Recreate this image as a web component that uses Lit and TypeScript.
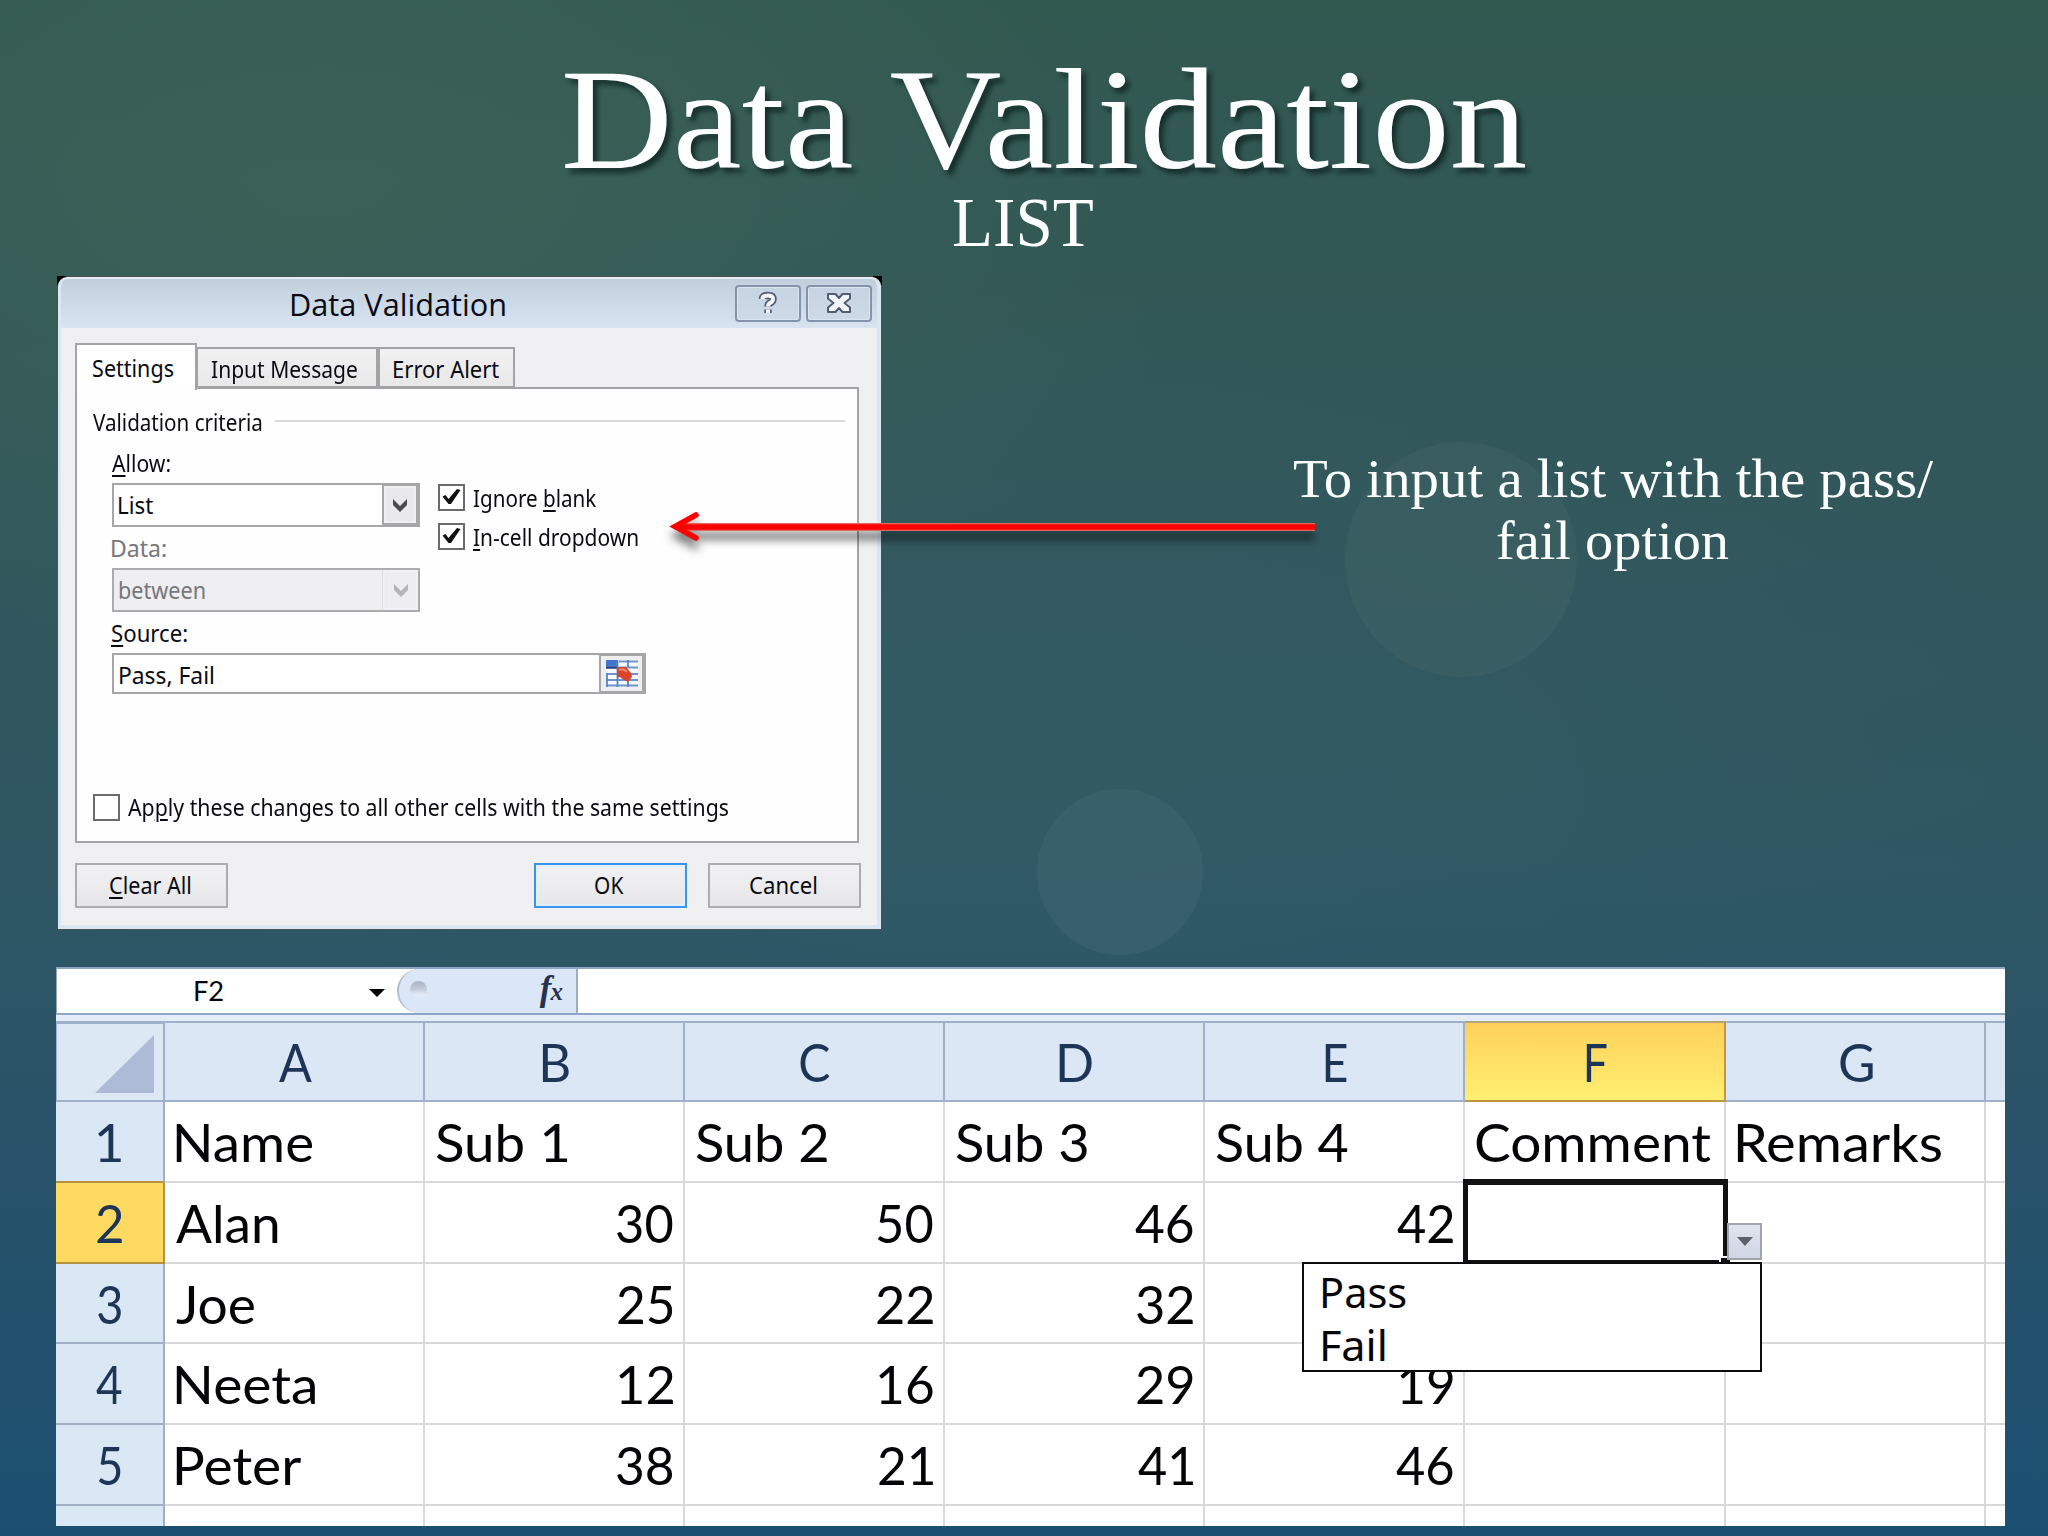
import { LitElement, html, css, svg, nothing } from "lit";
import { customElement, property } from "lit/decorators.js";
import { classMap } from "lit/directives/class-map.js";

/** One line of text whose inked width is set; `key` is the index of an underlined letter. */
@customElement("fit-text")
class FitText extends LitElement {
  @property() text = "";
  @property({ type: Number }) w = 0;
  @property({ type: Number }) key = -1;

  static styles = css`
    :host { display: inline-block; flex: none; }
    .t { display: inline-block; white-space: pre; transform-origin: 0 50%; }
    .u { text-decoration: underline; text-decoration-thickness: 2px; text-underline-offset: 3px; }
  `;

  firstUpdated() {
    const cs = getComputedStyle(this);
    const ctx = document.createElement("canvas").getContext("2d")!;
    ctx.font = `${cs.fontStyle} ${cs.fontWeight} ${cs.fontSize} ${cs.fontFamily}`;
    const m = ctx.measureText(this.text);
    const ink = m.actualBoundingBoxLeft + m.actualBoundingBoxRight;
    const s = this.w / ink;
    this.style.width = `${this.w}px`;
    const span = this.renderRoot.querySelector(".t") as HTMLElement;
    span.style.transform = `translateX(${m.actualBoundingBoxLeft * s}px) scaleX(${s})`;
  }

  render() {
    const { text, key } = this;
    if (key < 0) return html`<span class="t">${text}</span>`;
    return html`<span class="t">${text.slice(0, key)}<span class="u">${text[key]}</span>${text.slice(key + 1)}</span>`;
  }
}

const fit = (text: string, w: number, key = -1) =>
  html`<fit-text .text=${text} .w=${w} .key=${key}></fit-text>`;

@customElement("validation-dialog")
class ValidationDialog extends LitElement {
  static styles = css`
    * { box-sizing: border-box; }
    :host {
      display: block; width: 825px; height: 654px; padding: 1px 1px 1px;
      box-sizing: border-box; color: #0b0b14;
      font: 23px/30px "Noto Sans", "Open Sans", sans-serif;
      background:
        linear-gradient(#000, #000) 0 0 / 9px 9px no-repeat,
        linear-gradient(#000, #000) 100% 0 / 9px 9px no-repeat, #4b5257;
    }
    .win { height: 652px; border-radius: 9px 9px 0 0; background: #f0eff1; overflow: hidden;
      border: solid #dbe6f3; border-width: 2px 4px 4px 3px; border-top-color: #e4edf4; display: flex; flex-direction: column; }
    .bar { height: 49px; flex: none; display: flex; align-items: flex-start; padding: 6px 6px 0 231px;
      background: linear-gradient(#c2cfdc, #cddae7 55%, #d8e4f1); margin-right: -1px; }
    .bar fit-text { font: 31px/39px "Open Sans", sans-serif; margin-right: auto; }
    .cap { width: 66px; height: 37px; margin-left: 5px; border: 2px solid #8494ad; border-radius: 4px;
      background: linear-gradient(#c6d3e1, #cddbe9); box-shadow: inset 0 0 0 1px #dbe6f1; }
    .cap svg { display: block; margin: 4px auto 0; }
    .body { padding: 15px 0 0 14px; }
    .tabs { display: flex; align-items: flex-end; height: 45px; position: relative; z-index: 1; }
    .tab { height: 41px; border: 2px solid #a4a4a6; background: linear-gradient(#f2f1f2, #e8e8e9); padding: 5px 0 0 13px; }
    .tab.on { height: 47px; margin-bottom: -2px; background: #fff; border-bottom: 0; width: 122px; padding: 8px 0 0 16px; align-self: flex-start; }
    .t2 { width: 182px; margin-left: -1px; } .t3 { width: 137px; padding-left: 14px; }
    .panel { width: 784px; height: 456px; margin-top: -1px; border: 2px solid #a4a4a6; background: #fefefe;
      display: flex; flex-direction: column; padding: 17px 12px 20px 16px; }
    .legend { display: flex; align-items: center; gap: 13px; }
    .legend fit-text { line-height: 32px; margin-bottom: -2px; }
    .rule { height: 2px; flex: 1; background: #dadadf; }
    .cols { display: flex; gap: 18px; padding: 12px 0 0 19px; }
    .fields { display: flex; flex-direction: column; width: 308px; }
    .combo { height: 44px; border: 2px solid #a6a5a7; margin: 5px 0 6px; display: flex; padding-left: 5px; line-height: 41px; background: #fff; }
    .combo.off { background: #efeef0; color: #77777c; border-color: #acabad; }
    .btn { margin-left: auto; width: 36px; border: solid #a6a5a7; border-width: 1px 2px 2px 2px; background: #e9e8ea;
      display: grid; place-items: center; box-shadow: inset 0 0 0 2px #f1f0f2; }
    .off .btn { border-color: #dddcdf; border-width: 0 0 0 1px; width: 36px; background: #eeedef; }
    .dim { color: #77777c; }
    .checks { display: flex; flex-direction: column; gap: 12px; padding-top: 36px; }
    .check { display: flex; align-items: center; gap: 8px; height: 27px; }
    .check fit-text { line-height: 28px; }
    .box { width: 27px; height: 27px; border: 2px solid #6b6a6c; background: #fff; flex: none; display: grid; place-items: center; }
    .src { display: flex; flex-direction: column; padding-left: 19px; }
    .ref { width: 534px; height: 41px; margin-top: 5px; border: 2px solid #a6a5a7; display: flex; padding-left: 6px; line-height: 40px; background: #fff; }
    .pick { margin-left: auto; width: 45px; border: solid #a6a5a7; border-width: 1px 2px 1px 2px; background: #eeedef; display: grid; place-items: center; }
    .apply { margin-top: auto; }
    .apply fit-text { line-height: 29px; }
    .foot { display: flex; width: 786px; margin-top: 20px; gap: 21px; }
    .push { width: 153px; height: 45px; border: 2px solid #acabad; background: linear-gradient(#f2f1f3, #e6e5e7);
      display: flex; justify-content: center; line-height: 41px; padding-right: 3px; }
    .push.ok { margin-left: auto; border-color: #3c94ef; box-shadow: inset 0 0 0 2px #dff0fb; }
  `;

  private chev(c: string) {
    return html`<svg width="18" height="16" viewBox="0 0 18 16"><path d="M2 2 L9 9 L16 2 V8 L9 15 L2 8Z" fill=${c}></path></svg>`;
  }

  private box(on: boolean) {
    return html`<span class="box">${on
      ? html`<svg width="21" height="21" viewBox="0 0 21 21"><path d="M1.5 9.5 L4.5 8 L7.5 12 L16 2 L19.5 3 L10 17 H7.5Z" fill="#101012"></path></svg>`
      : nothing}</span>`;
  }

  render() {
    return html`
      <div class="win">
        <div class="bar">
          ${fit("Data Validation", 213)}
          <div class="cap"><svg width="24" height="25" viewBox="0 0 24 25">
            <g fill="none" stroke-linejoin="round">
              <path d="M6.500 8 Q6.500 4.500 12 4.500 Q17 4.500 17 8 Q17 10.500 14 12 Q12 13.200 12 15.500 M12 18.500 V22" stroke="#525e74" stroke-width="7.500"></path>
              <path d="M6.500 8 Q6.500 4.500 12 4.500 Q17 4.500 17 8 Q17 10.500 14 12 Q12 13.200 12 15.500 M12 18.500 V22" stroke="#f4f5f8" stroke-width="4"></path>
            </g></svg></div>
          <div class="cap"><svg width="26" height="25" viewBox="0 0 26 25">
            <path d="M2 3 H9.500 L13 7 L16.500 3 H24 V7.500 L18.500 12 L24 16.500 V21 H16.500 L13 17 L9.500 21 H2 V16.500 L7.500 12 L2 7.500Z"
              fill="#f4f5f8" stroke="#525e74" stroke-width="2" stroke-linejoin="round"></path>
          </svg></div>
        </div>
        <div class="body">
          <div class="tabs">
            <div class="tab on">${fit("Settings", 80)}</div>
            <div class="tab t2">${fit("Input Message", 146)}</div>
            <div class="tab t3">${fit("Error Alert", 105)}</div>
          </div>
          <div class="panel">
            <div class="legend">${fit("Validation criteria", 169)}<span class="rule"></span></div>
            <div class="cols">
              <div class="fields">
                ${fit("Allow:", 58, 0)}
                <div class="combo">${fit("List", 34)}<span class="btn">${this.chev("#4b4a4e")}</span></div>
                <span class="dim">${fit("Data:", 54)}</span>
                <div class="combo off">${fit("between", 86)}<span class="btn">${this.chev("#b5b4b8")}</span></div>
              </div>
              <div class="checks">
                <div class="check">${this.box(true)}${fit("Ignore blank", 124, 7)}</div>
                <div class="check">${this.box(true)}${fit("In-cell dropdown", 165, 0)}</div>
              </div>
            </div>
            <div class="src">
              ${fit("Source:", 75, 0)}
              <div class="ref">${fit("Pass, Fail", 93)}<span class="pick">
                <svg width="32" height="27" viewBox="0 0 32 27">
                  <rect width="32" height="27" fill="#f7fafd"></rect>
                  <rect width="12" height="6" fill="#4377cf"></rect>
                  <path d="M0 7.500 H12" stroke="#1f3f86" stroke-width="2.500"></path>
                  <path d="M13 1.500 H32 M13 7.500 H32 M0 14 H32 M0 20 H32 M0 25.500 H32" stroke="#6f93cc" stroke-width="2.200"></path>
                  <path d="M1 13 V27 M11.500 0 V27 M22 0 V7 M22 20 V27" stroke="#5b83c4" stroke-width="1.800"></path>
                  <path d="M11 7 L20 7 L25 13 L26 17 L22 22 L18 20 L14 17 L11 18Z" fill="#d8452c"></path>
                  <path d="M13 9.500 L18 9.500 L21 12" stroke="#f08a72" stroke-width="2" fill="none"></path>
                </svg></span></div>
            </div>
            <div class="check apply">${this.box(false)}${fit("Apply these changes to all other cells with the same settings", 600, 2)}</div>
          </div>
          <div class="foot">
            <div class="push">${fit("Clear All", 80, 0)}</div>
            <div class="push ok">${fit("OK", 29)}</div>
            <div class="push">${fit("Cancel", 66)}</div>
          </div>
        </div>
      </div>`;
  }
}

type Cell = [string, number];
const COLS: Cell[] = [["A", 33], ["B", 27], ["C", 30], ["D", 33], ["E", 22], ["F", 21], ["G", 33]];
const ROWS: { n: Cell; cells: Cell[] }[] = [
  { n: ["1", 23], cells: [["Name", 136], ["Sub 1", 131], ["Sub 2", 131], ["Sub 3", 131], ["Sub 4", 132], ["Comment", 235], ["Remarks", 204]] },
  { n: ["2", 25], cells: [["Alan", 102], ["30", 56], ["50", 56], ["46", 58], ["42", 56], ["", 0], ["", 0]] },
  { n: ["3", 23], cells: [["Joe", 78], ["25", 55], ["22", 56], ["32", 56], ["", 0], ["", 0], ["", 0]] },
  { n: ["4", 26], cells: [["Neeta", 139], ["12", 54], ["16", 54], ["29", 56], ["19", 53], ["", 0], ["", 0]] },
  { n: ["5", 23], cells: [["Peter", 125], ["38", 56], ["21", 54], ["41", 55], ["46", 57], ["", 0], ["", 0]] },
];

@customElement("excel-sheet")
class ExcelSheet extends LitElement {
  static styles = css`
    * { box-sizing: border-box; }
    :host { display: block; position: relative; width: 1949px; height: 559px; overflow: hidden; background: #fff;
      font: 53px/80px Lato, "Open Sans", sans-serif; color: #050508; }
    .bar { display: flex; height: 48px; border: solid #8fa5c6; border-width: 2px 0 2px 1px; }
    .name { width: 340px; display: flex; align-items: center; padding-left: 138px; font-size: 26px; line-height: 44px; }
    .tri { width: 0; height: 0; border: solid transparent; border-width: 8px 8px 0; border-top-color: #000; margin: 3px 0 0 146px; }
    .fx { width: 181px; border: 2px solid #b2bdca; border-width: 0 2px 0 2px; border-right-color: #9aadcb; border-radius: 22px 0 0 22px;
      background: #dbe7f6; display: flex; align-items: flex-start; padding-left: 11px; }
    .knob { width: 17px; height: 17px; border-radius: 9px; margin-top: 12px; background: linear-gradient(#a9b2c0, #c3ccd8 50%, #e2ebf6 80%); }
    .f { margin-left: auto; font: italic bold 35px/40px "Liberation Serif", serif; color: #26344f; }
    .x { font: italic bold 25px/46px "Liberation Serif", serif; color: #26344f; margin: 0 13px 0 -1px; }
    .strip { height: 6px; background: #e4edf8; }
    .grid { display: grid; grid-template-columns: 108.500px repeat(7, 260.200px) 20px; grid-template-rows: 81px repeat(5, 80.800px) 21px; }
    .c { border: solid #d9d9dc; border-width: 0 2px 2px 0; padding-left: 11px; overflow: hidden; display: flex; }
    .c.r { justify-content: flex-end; padding: 0 10px 0 0; }
    .h { background: #dbe7f5; border: solid #9fb1cd; border-width: 2px 2px 2px 0; display: flex; justify-content: center; color: #1d3557; line-height: 78px; padding-left: 3px; }
    .n { background: #dae7f5; border: solid #9fb0c4; border-width: 0 2px 2px 0; display: flex; justify-content: center; color: #1d3557; }
    .n.last, .c.last { border-bottom: 0; }
    .c.end, .h.end { border-right: 0; }
    .h.sel { background: linear-gradient(#fed05b, #fff071); border-color: #c3953f; border-top-color: #b3a67a; }
    .n.sel { background: #ffda62; border-color: #b5923f; }
    .n.pre { border-bottom-color: #b5923f; }
    .all { background: #dce8f3; align-items: flex-end; justify-content: flex-end; padding: 0 9px 7px 0; border-left: 1px solid #9fb1cd; border-top-width: 3px; }
    .all svg { display: block; }
    .cursor { position: absolute; left: 1407px; top: 212px; width: 265px; height: 85px; border: 5px solid #111013; border-top-width: 6px; border-bottom-width: 4px; }
    .drop { position: absolute; left: 1671px; top: 256px; width: 35px; height: 37px; border: 2px solid #a0a4ac; background: linear-gradient(#dfe4ee, #cfd6e4); display: grid; place-items: center; }
    .handle { position: absolute; left: 1663px; top: 289px; width: 11px; height: 8px; background: #111013; border: solid #fff; border-width: 2px 0 0 2px; }
    .list { position: absolute; left: 1246px; top: 295px; width: 460px; height: 110px; border: 2px solid #0c0c0e; background: #fff;
      font: 42px/53px "Noto Sans", sans-serif; padding: 1px 0 0 19px; display: flex; flex-direction: column; align-items: flex-start; }
  `;

  render() {
    return html`
      <div class="bar">
        <div class="name">${fit("F2", 28)}<span class="tri"></span></div>
        <div class="fx"><span class="knob"></span><span class="f">f</span><span class="x">x</span></div>
      </div>
      <div class="strip"></div>
      <div class="grid">
        <div class="h all"><svg width="59" height="58" viewBox="0 0 60 60" preserveAspectRatio="none"><path d="M60 0 V60 H0Z" fill="#aebbd6"></path></svg></div>
        ${COLS.map((c, i) => html`<div class=${classMap({ h: true, sel: i === 5 })}>${fit(c[0], c[1])}</div>`)}
        <div class="h end"></div>
        ${ROWS.map((row, r) => html`
          <div class=${classMap({ n: true, sel: r === 1, pre: r === 0 })}>${fit(row.n[0], row.n[1])}</div>
          ${row.cells.map((c, i) => html`<div class=${classMap({ c: true, r: r > 0 && i > 0 })}>${c[0] ? fit(c[0], c[1]) : nothing}</div>`)}
          <div class="c end"></div>`)}
        <div class="n last"></div>
        ${COLS.map(() => html`<div class="c last"></div>`)}
        <div class="c last end"></div>
      </div>
      <div class="cursor"></div>
      <div class="handle"></div>
      <div class="drop"><svg width="16" height="9" viewBox="0 0 16 9"><path d="M0 0 H16 L8 9Z" fill="#5d6068"></path></svg></div>
      <div class="list">${fit("Pass", 83)}${fit("Fail", 62)}</div>`;
  }
}

@customElement("app-root")
class AppRoot extends LitElement {
  static styles = css`
    * { box-sizing: border-box; }
    :host { display: block; }
    .slide { position: relative; width: 2048px; height: 1536px; overflow: hidden; color: #fdffff;
      font-family: "Liberation Serif", serif; display: flex; flex-direction: column; padding-top: 48px;
      background:
        radial-gradient(ellipse 900px 520px at 320px 170px, rgba(70, 108, 92, .45), transparent),
        radial-gradient(ellipse 1100px 500px at 1050px 780px, rgba(56, 100, 108, .25), transparent),
        linear-gradient(#31584f 0, #32575a 30%, #2f5763 55%, #285269 75%, #1b4f70 100%); }
    .title { padding-left: 565px; font-size: 144px; line-height: 144px; height: 144px; text-shadow: 4px 5px 5px rgba(12, 32, 30, .75); }
    .sub { padding-left: 954px; font-size: 70px; line-height: 61px; height: 60px; }
    .mid { display: flex; margin: 24px 0 0 57px; height: 654px; }
    .note { display: flex; flex-direction: column; align-items: center; width: 640px; margin-left: 411px; padding-top: 172px; font-size: 54px; line-height: 62px; }
    .sheet { margin: 37px 0 0 56px; position: relative; }
    .orb { position: absolute; border-radius: 50%; background: rgba(110, 135, 125, .13); }
    .o1 { left: 1345px; top: 442px; width: 232px; height: 235px; }
    .o2 { left: 1037px; top: 789px; width: 166px; height: 166px; background: rgba(100, 135, 140, .15); }
    .arrow { position: absolute; left: 652px; top: 500px; filter: drop-shadow(0 9px 4px rgba(0, 0, 0, .5)); }
  `;

  render() {
    return html`
      <div class="slide">
        <div class="orb o1"></div>
        <div class="orb o2"></div>
        <div class="title">${fit("Data Validation", 963)}</div>
        <div class="sub">${fit("LIST", 139)}</div>
        <div class="mid">
          <validation-dialog></validation-dialog>
          <div class="note">${fit("To input a list with the pass/", 640)}${fit("fail option", 232)}</div>
        </div>
        <excel-sheet class="sheet"></excel-sheet>
        <svg class="arrow" width="680" height="56" viewBox="0 0 680 56">
          ${svg`<path d="M28 27 H663" stroke="#e0685f" stroke-width="8"></path>
          <path d="M26 27 H663" stroke="#fe0000" stroke-width="5.500"></path>
          <path d="M44 15 L23 26.500 L44 38" fill="none" stroke="#fe0000" stroke-width="5.500" stroke-linecap="round"></path>`}
        </svg>
      </div>`;
  }
}
